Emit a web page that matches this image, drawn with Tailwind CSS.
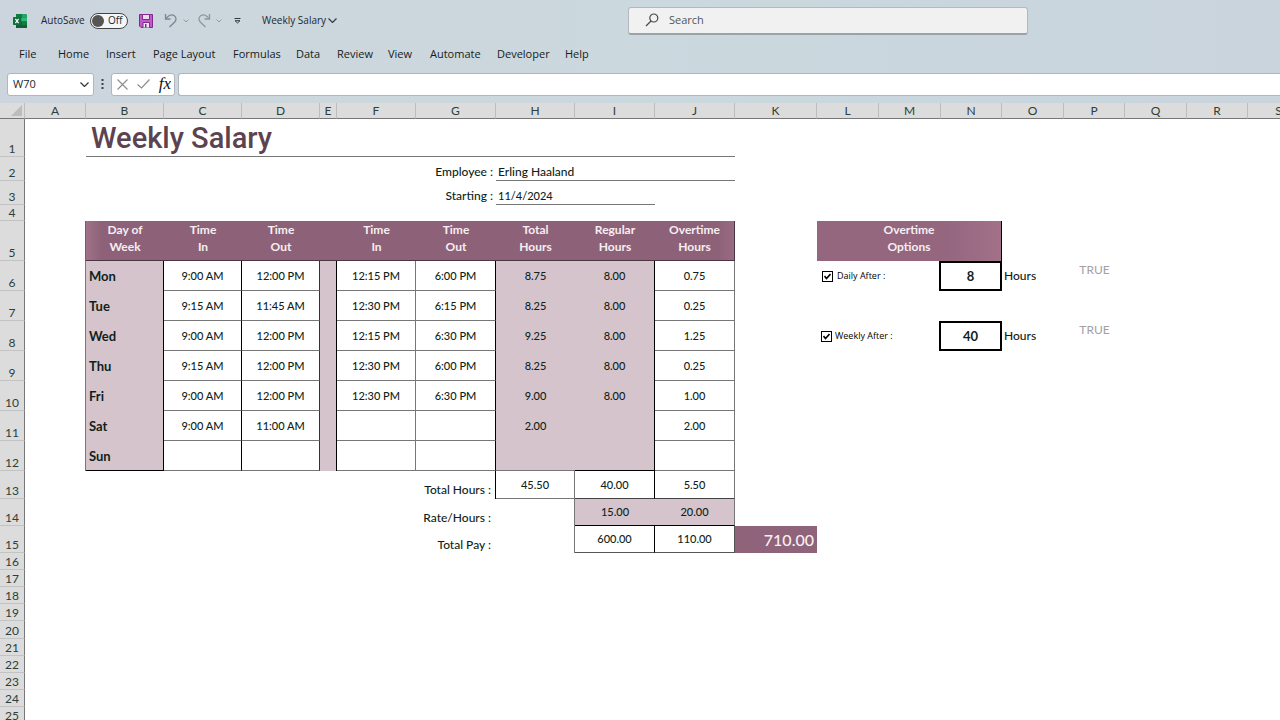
<!DOCTYPE html>
<html lang="en">
<head>
<meta charset="utf-8">
<meta name="viewport" content="width=device-width, initial-scale=1">
<title>Weekly Salary</title>
<script src="https://cdn.jsdelivr.net/npm/@tailwindcss/browser@4"></script>
</head>
<body class="flex h-screen flex-col overflow-hidden bg-white font-['Open_Sans',sans-serif] text-[11px] text-[#20282e]">

<header class="shrink-0 bg-linear-to-r from-[#ccd5dd] via-[#cbd8de] to-[#c9d4dd]">
  <!-- Title bar -->
  <div class="flex h-[41px] items-center">
    <svg class="ml-[13px] size-[14px] shrink-0" viewBox="0 0 14 14" role="img" aria-label="Excel">
      <rect x="3" y="0" width="11" height="14" rx="1" fill="#21a366"/>
      <path d="M3 0h6v4H3z" fill="#107c41"/><path d="M9 4h5v3.500H9z" fill="#2fb978"/><path d="M3 7.500h11V14H3z" fill="#185c37"/><path d="M9 7.500h5V11H9z" fill="#107c41"/>
      <rect x="0" y="3" width="8" height="8" rx=".8" fill="#0e6f3a"/>
      <path d="M2.400 4.800l3.200 4.400M5.600 4.800L2.400 9.200" stroke="#fff" stroke-width="1.200"/>
    </svg>
    <span id="autosave" class="ml-[14px] w-[49px] text-[10px]">AutoSave</span>
    <button type="button" role="switch" aria-checked="false" aria-labelledby="autosave" class="flex h-4 w-[38px] shrink-0 items-center gap-1 rounded-full border border-[#444] bg-[#f5f6f7] pl-px text-[10px]"><span class="size-3 rounded-full bg-[#555]"></span>Off</button>
    <button type="button" aria-label="Save" class="ml-[11px]">
      <svg class="size-[14px]" viewBox="0 0 14 14"><path d="M.5.5h13v13H2L.5 12z" fill="#bd5cc4" stroke="#83288e"/><path d="M3.500.5h7v5h-7z" fill="#eadcec" stroke="#83288e"/><path d="M4 13.500v-5h6.500v5" fill="#f2e6f3" stroke="#83288e"/><path d="M6 10h1.500v3.500H6z" fill="#83288e"/></svg>
    </button>
    <button type="button" aria-label="Undo" class="ml-[11px] flex items-center gap-[5px]">
      <svg class="h-[15px] w-[14px]" viewBox="0 0 14 15" fill="none" stroke="#7d868d" stroke-width="1.300"><path d="M1.500 1v5h5"/><path d="M1.800 5.800C4 2.800 7.500.9 10 2.500c2.700 1.700 2.500 4.800.5 6.800L5.500 14"/></svg>
      <svg class="h-[4px] w-[6px]" viewBox="0 0 6 4" fill="none" stroke="#949ca3"><path d="M.5.5L3 3 5.500.5"/></svg>
    </button>
    <button type="button" aria-label="Redo" class="ml-[8px] flex items-center gap-[5px]">
      <svg class="h-[15px] w-[14px]" viewBox="0 0 14 15" fill="none" stroke="#8e979d" stroke-width="1.300"><path d="M12.500 1v5h-5"/><path d="M12.200 5.800C10 2.800 6.500.9 4 2.500 1.300 4.200 1.500 7.300 3.500 9.300L8.500 14"/></svg>
      <svg class="h-[4px] w-[6px]" viewBox="0 0 6 4" fill="none" stroke="#949ca3"><path d="M.5.5L3 3 5.500.5"/></svg>
    </button>
    <button type="button" aria-label="Customize Quick Access Toolbar" class="ml-[12px]">
      <svg class="h-[6px] w-[7px]" viewBox="0 0 7 6" fill="none" stroke="#333b40"><path d="M.5.5h6M1 2.700l2.500 2.300L6 2.700z"/></svg>
    </button>
    <button type="button" class="ml-[21px] flex w-[75px] items-center justify-between whitespace-nowrap text-[10px]">Weekly Salary
      <svg class="h-[5px] w-[9px]" viewBox="0 0 9 5" fill="none" stroke="#333b40" stroke-width="1.200"><path d="M.5.5l4 4 4-4"/></svg>
    </button>
    <label class="ml-[291px] flex h-[28px] w-[400px] items-center gap-[10px] rounded-[3px] border border-b-2 border-[#b3b9be] border-b-[#9ca3a8] bg-[#f1f1f1] pl-4">
      <svg class="size-[14px] shrink-0" viewBox="0 0 14 14" fill="none" stroke="#43494e" stroke-width="1.200"><circle cx="8.800" cy="5" r="4"/><path d="M6 8L1 13"/></svg>
      <input type="search" aria-label="Search" placeholder="Search" class="w-full bg-transparent outline-none placeholder:text-[#50565b]">
    </label>
  </div>

  <!-- Ribbon tabs -->
  <nav class="flex h-[27px] items-center pl-[19px] text-[#161c20]">
    <a href="#" class="w-[39px]">File</a>
    <a href="#" class="w-[48px]">Home</a>
    <a href="#" class="w-[47px]">Insert</a>
    <a href="#" class="w-[80px] whitespace-nowrap">Page Layout</a>
    <a href="#" class="w-[63px]">Formulas</a>
    <a href="#" class="w-[41px]">Data</a>
    <a href="#" class="w-[51px]">Review</a>
    <a href="#" class="w-[42px]">View</a>
    <a href="#" class="w-[67px]">Automate</a>
    <a href="#" class="w-[68px]">Developer</a>
    <a href="#">Help</a>
  </nav>

  <!-- Formula bar -->
  <div class="flex h-[35px] items-center pb-1 pl-[7px] pt-px">
    <div class="flex h-[23px] w-[87px] items-center rounded-[3px] border border-[#b0b6bb] bg-white pl-[5px] pr-1">
      <input aria-label="Name box" value="W70" class="w-0 grow outline-none">
      <button type="button" aria-label="Open name list"><svg class="h-[5px] w-[9px]" viewBox="0 0 9 5" fill="none" stroke="#333" stroke-width="1.200"><path d="M.5.5l4 4 4-4"/></svg></button>
    </div>
    <svg class="mx-[7px] h-[10px] w-[3px]" viewBox="0 0 3 10" fill="#3c4246"><path d="M.5 0h2v2h-2zM.5 4h2v2h-2zM.5 8h2v2h-2z"/></svg>
    <div class="flex h-[23px] w-[64px] items-center justify-between rounded-[3px] border border-[#b0b6bb] bg-white pl-[5px] pr-[3px]">
      <button type="button" aria-label="Cancel"><svg class="size-[11px]" viewBox="0 0 11 11" stroke="#8c8c8c" stroke-width="1.100"><path d="M.5.5l10 10M10.500.5l-10 10"/></svg></button>
      <button type="button" aria-label="Enter"><svg class="h-[10px] w-[13px]" viewBox="0 0 13 10" fill="none" stroke="#8c8c8c" stroke-width="1.200"><path d="M.5 5.500l4 3.500L12.500.5"/></svg></button>
      <button type="button" aria-label="Insert function" class="font-['Liberation_Serif',serif] text-[17px] italic leading-4 text-[#111]">fx</button>
    </div>
    <input aria-label="Formula" class="ml-[3px] h-[23px] grow rounded-l-[3px] border border-r-0 border-[#b0b6bb] bg-white px-2 outline-none">
  </div>
</header>

<main class="grow overflow-hidden">
<table class="w-[1310px] table-fixed border-separate border-spacing-0 font-['Lato',sans-serif] text-[12px] font-medium leading-[14px] text-[#0f1f1a] [&_tbody_th[scope=row]]:border-b [&_tbody_th[scope=row]]:border-r [&_tbody_th[scope=row]]:border-b-[#c3c3c3] [&_tbody_th[scope=row]]:border-r-[#777] [&_tbody_th[scope=row]]:bg-[#dcdcdc] [&_tbody_th[scope=row]]:align-bottom [&_tbody_th[scope=row]]:font-normal [&_tbody_th[scope=row]]:text-[#2c4038] [&_td]:p-0 [&_th]:p-0">
  <colgroup>
    <col class="w-[25px]"><col class="w-[61px]"><col class="w-[78px]"><col class="w-[78px]"><col class="w-[78px]"><col class="w-[17px]"><col class="w-[79px]"><col class="w-[80px]"><col class="w-[79px]"><col class="w-[80px]"><col class="w-[80px]"><col class="w-[82px]"><col class="w-[62px]"><col class="w-[62px]"><col class="w-[61px]"><col class="w-[62px]"><col class="w-[61px]"><col class="w-[62px]"><col class="w-[61px]"><col class="w-[62px]">
  </colgroup>
  <thead>
    <tr class="h-4 [&>th]:border-b [&>th]:border-r [&>th]:border-b-[#777] [&>th]:border-r-[#bdbdbd] [&>th]:bg-[#dcdcdc] [&>th]:font-normal [&>th]:text-[#2c4038]">
      <th scope="col" aria-label="Select all"><svg class="ml-[11px] size-[11px]" viewBox="0 0 11 11" fill="#bcbcbc"><path d="M11 0v11H0z"/></svg></th>
      <th scope="col">A</th><th scope="col">B</th><th scope="col">C</th><th scope="col">D</th><th scope="col">E</th><th scope="col">F</th><th scope="col">G</th><th scope="col">H</th><th scope="col">I</th><th scope="col">J</th><th scope="col">K</th><th scope="col">L</th><th scope="col">M</th><th scope="col">N</th><th scope="col">O</th><th scope="col">P</th><th scope="col">Q</th><th scope="col">R</th><th scope="col">S</th>
    </tr>
  </thead>
  <tbody>
    <tr class="h-[38px]"><th scope="row">1</th><td></td><td colspan="9" class="border-b border-[#777]"><h1 class="pl-[5px] pt-px font-['Roboto',sans-serif] text-[29px] font-medium leading-[36px] text-[#5c4350]">Weekly Salary</h1></td></tr>
    <tr class="h-[24px]"><th scope="row">2</th><td colspan="5"></td><td colspan="2"><div class="pr-[3px] pt-[6px] text-right">Employee :</div></td><td colspan="3" class="border-b border-[#777]"><div class="pl-[2px] pt-[6px]">Erling Haaland</div></td></tr>
    <tr class="h-[24px]"><th scope="row">3</th><td colspan="5"></td><td colspan="2"><div class="pr-[3px] pt-[6px] text-right">Starting :</div></td><td colspan="2" class="border-b border-[#777]"><div class="pl-[2px] pt-[6px] text-[11px]">11/4/2024</div></td></tr>
    <tr class="h-4"><th scope="row">4</th></tr>
    <tr class="h-[40px] [&>td]:align-top [&>td]:text-center [&>td]:font-bold [&>td]:leading-[17px] [&>td]:text-[#f6eef2]">
      <th scope="row">5</th><td class="border-r border-[#666]"></td>
      <td class="border-b border-[#4a3540] bg-linear-to-r from-[#a0728a] to-[#8d6278] to-20%">Day of<br>Week</td>
      <td class="border-b border-[#4a3540] bg-[#8d6278]">Time<br>In</td>
      <td class="border-b border-[#4a3540] bg-[#8d6278]">Time<br>Out</td>
      <td class="border-b border-[#4a3540] bg-[#8d6278]"></td>
      <td class="border-b border-[#4a3540] bg-[#8d6278]">Time<br>In</td>
      <td class="border-b border-[#4a3540] bg-[#8d6278]">Time<br>Out</td>
      <td class="border-b border-[#4a3540] bg-[#8d6278]">Total<br>Hours</td>
      <td class="border-b border-[#4a3540] bg-[#8d6278]">Regular<br>Hours</td>
      <td class="border-b border-r border-[#4a3540] bg-linear-to-l from-[#9a6b83] to-[#8d6278] to-20%">Overtime<br>Hours</td>
      <td></td>
      <td colspan="3" class="border-r border-black bg-linear-to-r from-[#94677f] via-[#94677f] via-70% to-[#a27089]">Overtime<br>Options</td>
    </tr>
  </tbody>
  <tbody class="[&_td]:text-center [&_td]:align-middle [&_td]:text-[11px] [&_td:nth-child(2)]:border-r [&_td:nth-child(2)]:border-[#777] [&_td:nth-child(3)]:border-r [&_td:nth-child(3)]:border-black [&_td:nth-child(3)]:bg-[#d5c4cc] [&_td:nth-child(3)]:pl-[3px] [&_td:nth-child(3)]:text-left [&_td:nth-child(3)]:text-[13px] [&_td:nth-child(3)]:font-bold [&_td:nth-child(4)]:border-b [&_td:nth-child(4)]:border-r [&_td:nth-child(4)]:border-b-[#777] [&_td:nth-child(4)]:border-r-black [&_td:nth-child(5)]:border-b [&_td:nth-child(5)]:border-r [&_td:nth-child(5)]:border-b-[#777] [&_td:nth-child(5)]:border-r-[#333] [&_td:nth-child(6)]:border-r [&_td:nth-child(6)]:border-black [&_td:nth-child(6)]:bg-[#d5c4cc] [&_td:nth-child(7)]:border-b [&_td:nth-child(7)]:border-r [&_td:nth-child(7)]:border-[#777] [&_td:nth-child(8)]:border-b [&_td:nth-child(8)]:border-r [&_td:nth-child(8)]:border-b-[#777] [&_td:nth-child(8)]:border-r-black [&_td:nth-child(9)]:bg-[#d5c4cc] [&_td:nth-child(10)]:border-r [&_td:nth-child(10)]:border-black [&_td:nth-child(10)]:bg-[#d5c4cc] [&_td:nth-child(11)]:border-b [&_td:nth-child(11)]:border-r [&_td:nth-child(11)]:border-[#777]">
    <tr class="h-[30px]"><th scope="row">6</th><td></td><td>Mon</td><td>9:00 AM</td><td>12:00 PM</td><td></td><td>12:15 PM</td><td>6:00 PM</td><td>8.75</td><td>8.00</td><td>0.75</td><td></td>
      <td colspan="2" class="border-r-2 border-black"><label class="flex items-center gap-1 pl-[5px] font-['Open_Sans',sans-serif] text-[9px] text-black"><input type="checkbox" checked class="size-[11px] appearance-none border border-black bg-white"><svg class="pointer-events-none -ml-[13px] size-[7px]" viewBox="0 0 7 7" fill="none" stroke="#000" stroke-width="1.600"><path d="M.5 3l2 2.500L6.500 1"/></svg><span class="pl-[2px]">Daily After :</span></label></td>
      <td class="border-2 border-l-0 border-black"><span class="text-[13px] font-bold">8</span></td><td><div class="pl-[2px] text-left text-[12px]">Hours</div></td><td><div class="-mt-3 text-[12px] font-normal text-[#a3a0a3]">TRUE</div></td></tr>
    <tr class="h-[30px]"><th scope="row">7</th><td></td><td>Tue</td><td>9:15 AM</td><td>11:45 AM</td><td></td><td>12:30 PM</td><td>6:15 PM</td><td>8.25</td><td>8.00</td><td>0.25</td></tr>
    <tr class="h-[30px]"><th scope="row">8</th><td></td><td>Wed</td><td>9:00 AM</td><td>12:00 PM</td><td></td><td>12:15 PM</td><td>6:30 PM</td><td>9.25</td><td>8.00</td><td>1.25</td><td></td>
      <td colspan="2" class="border-r-2 border-black"><label class="flex items-center gap-1 pl-1 font-['Open_Sans',sans-serif] text-[9px] text-black"><input type="checkbox" checked class="size-[11px] appearance-none border border-black bg-white"><svg class="pointer-events-none -ml-[13px] size-[7px]" viewBox="0 0 7 7" fill="none" stroke="#000" stroke-width="1.600"><path d="M.5 3l2 2.500L6.500 1"/></svg><span class="pl-px">Weekly After :</span></label></td>
      <td class="border-2 border-l-0 border-black"><span class="text-[13px] font-bold">40</span></td><td><div class="pl-[2px] text-left text-[12px]">Hours</div></td><td><div class="-mt-3 text-[12px] font-normal text-[#a3a0a3]">TRUE</div></td></tr>
    <tr class="h-[30px]"><th scope="row">9</th><td></td><td>Thu</td><td>9:15 AM</td><td>12:00 PM</td><td></td><td>12:30 PM</td><td>6:00 PM</td><td>8.25</td><td>8.00</td><td>0.25</td></tr>
    <tr class="h-[30px]"><th scope="row">10</th><td></td><td>Fri</td><td>9:00 AM</td><td>12:00 PM</td><td></td><td>12:30 PM</td><td>6:30 PM</td><td>9.00</td><td>8.00</td><td>1.00</td></tr>
    <tr class="h-[30px]"><th scope="row">11</th><td></td><td>Sat</td><td>9:00 AM</td><td>11:00 AM</td><td></td><td></td><td></td><td>2.00</td><td></td><td>2.00</td></tr>
    <tr class="h-[30px]"><th scope="row">12</th><td></td><td class="border-b">Sun</td><td></td><td></td><td></td><td></td><td></td><td class="border-b border-[#777]"></td><td class="border-b"></td><td></td></tr>
  </tbody>
  <tbody class="[&_td]:text-center [&_td]:text-[11px]">
    <tr class="h-[28px]"><th scope="row">13</th><td colspan="5"></td><td colspan="2" class="border-r border-black"><div class="pr-1 pt-[10px] text-right text-[12px]">Total Hours :</div></td><td class="border-b border-r border-[#777]">45.50</td><td class="border-b border-r border-b-[#444] border-r-black">40.00</td><td class="border-b border-r border-b-[#444] border-r-[#777]">5.50</td></tr>
    <tr class="h-[27px]"><th scope="row">14</th><td colspan="5"></td><td colspan="2"><div class="pr-[5px] pt-[10px] text-right text-[12px]">Rate/Hours :</div></td><td class="border-r border-[#777]"></td><td class="border-b border-black bg-[#d5c4cc]">15.00</td><td class="border-b border-r border-b-black border-r-[#777] bg-[#d5c4cc]">20.00</td></tr>
    <tr class="h-[27px]"><th scope="row">15</th><td colspan="5"></td><td colspan="2"><div class="pr-[5px] pt-[10px] text-right text-[12px]">Total Pay :</div></td><td class="border-r border-[#777]"></td><td class="border-b border-r border-b-[#555] border-r-black">600.00</td><td class="border-b border-r border-[#555]">110.00</td><td class="bg-[#8f637a]"><div class="pr-[3px] text-right text-[16px] text-[#f8f0f4]">710.00</div></td></tr>
    <tr class="h-[17px]"><th scope="row">16</th></tr>
    <tr class="h-[17px]"><th scope="row">17</th></tr>
    <tr class="h-[17px]"><th scope="row">18</th></tr>
    <tr class="h-[17px]"><th scope="row">19</th></tr>
    <tr class="h-[18px]"><th scope="row">20</th></tr>
    <tr class="h-[17px]"><th scope="row">21</th></tr>
    <tr class="h-[17px]"><th scope="row">22</th></tr>
    <tr class="h-[17px]"><th scope="row">23</th></tr>
    <tr class="h-[17px]"><th scope="row">24</th></tr>
    <tr class="h-[17px]"><th scope="row">25</th></tr>
  </tbody>
</table>
</main>
</body>
</html>
